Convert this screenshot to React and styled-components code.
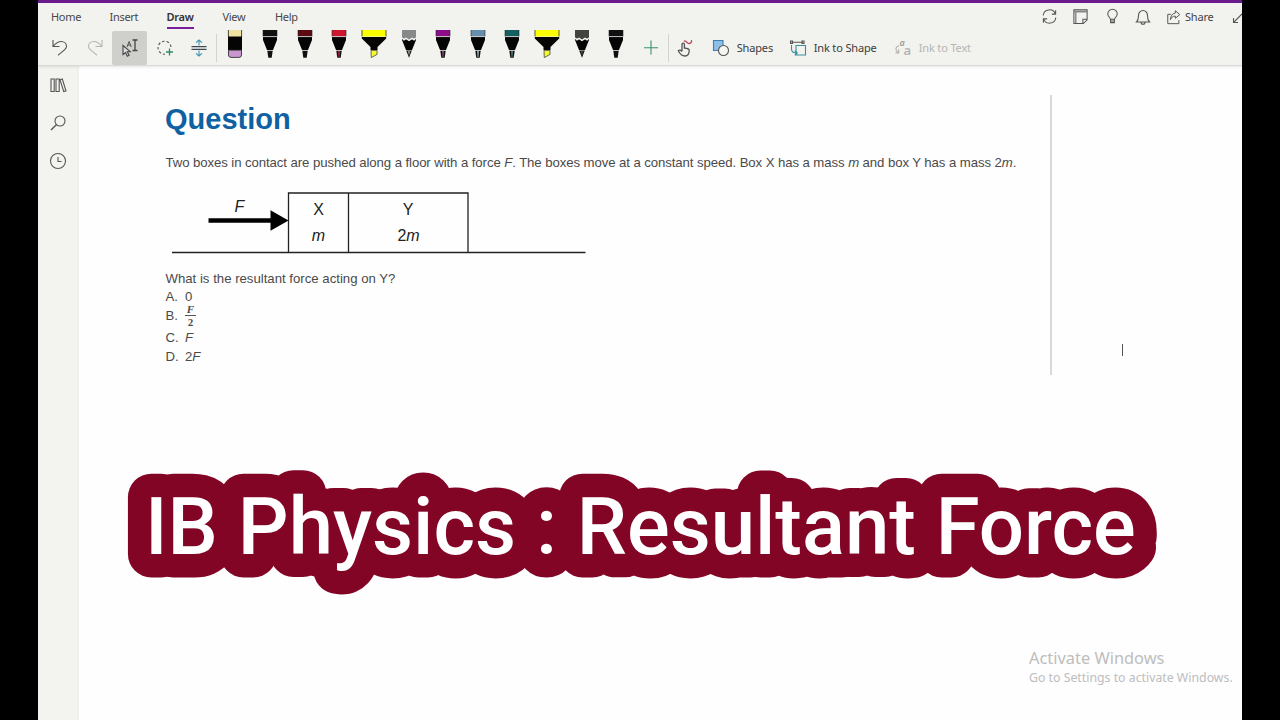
import styled, { createGlobalStyle } from 'styled-components';

const GlobalStyle = createGlobalStyle`
    * {
        box-sizing: border-box;
    }
    body {
        margin: 0;
        background: #000;
        font-family: 'Noto Sans', 'Open Sans', sans-serif;
    }
`

const Screen = styled.div`
    display: flex;
    justify-content: center;
    width: 1280px;
    height: 720px;
    background: #000;
    overflow: hidden;
`

const Window = styled.div`
    position: relative;
    display: flex;
    flex-direction: column;
    width: 1204px;
    height: 720px;
    background: #fefefe;
    overflow: hidden;
`

const Ribbon = styled.header`
    display: flex;
    flex-direction: column;
    flex: none;
    height: 66px;
    background: #f2f2ee;
    border-top: 3px solid #6a1a8c;
    border-bottom: 1px solid #d9d9d8;
    box-shadow: 0 1px 3px rgba(0, 0, 0, 0.1);
    z-index: 1;
`

const TabRow = styled.div`
    display: flex;
    justify-content: space-between;
    height: 28px;
`

const Tabs = styled.nav`
    display: flex;
    gap: 28.5px;
    padding-left: 13px;
`

const Tab = styled.a`
    width: ${(p) => p.$width}px;
    height: 26px;
    border-bottom: 2px solid ${(p) => p.$active ? '#7a1f9c' : 'transparent'};
    color: ${(p) => p.$active ? '#333' : '#484848'};
    font-size: 11px;
    font-weight: ${(p) => p.$active ? 600 : 400};
    letter-spacing: -0.3px;
    line-height: 27px;
    white-space: nowrap;
`

const Actions = styled.div`
    display: flex;
    align-items: center;
    height: 27px;
`

const Action = styled.div`
    display: flex;
    align-items: center;
    justify-content: center;
    width: 31.3px;
`

const Share = styled.div`
    display: flex;
    align-items: center;
    gap: 3px;
    width: 73px;
    padding-left: 7px;
    color: #444;
    font-size: 11px;
    letter-spacing: -0.2px;
`

const Tools = styled.div`
    display: flex;
    align-items: center;
    height: 34px;
    padding-left: 4px;
`

const ToolButton = styled.div`
    display: flex;
    align-items: center;
    justify-content: center;
    width: ${(p) => p.$width || 35}px;
    height: 34px;
    flex: none;
    border-radius: 2px;
    background: ${(p) => p.$active ? '#cfcfcc' : 'transparent'};
`

const PenButton = styled(ToolButton)`
    align-items: flex-start;

    svg {
        margin-top: -2px;
    }
`

const Divider = styled.div`
    flex: none;
    width: 1px;
    height: 28px;
    background: #d2d2d0;
`

const LabelButton = styled.div`
    display: flex;
    align-items: center;
    gap: 7px;
    flex: none;
    width: ${(p) => p.$width}px;
    padding-left: 10px;
    color: ${(p) => p.$disabled ? '#b5b5b3' : '#3c3c3c'};
    font-size: 11px;
    letter-spacing: -0.15px;
    line-height: 16px;
    white-space: nowrap;
`

const Body = styled.div`
    display: flex;
    flex: 1;
`

const Rail = styled.aside`
    display: flex;
    flex-direction: column;
    align-items: center;
    gap: 20px;
    width: 41px;
    padding-top: 10px;
    background: #f3f4f0;
    border-right: 2px solid #f0f0ef;
`

const Page = styled.main`
    display: flex;
    align-items: flex-start;
    flex: 1;
    padding: 29px 0 0 86.5px;
`

const Question = styled.section`
    width: 886px;
    height: 280px;
    border-right: 2px solid #d9d9d9;
    color: #4a4a4a;
    font-family: 'Liberation Sans', Arial, sans-serif;
    font-size: 13.2px;
`

const Title = styled.h1`
    margin: 0 0 0 -0.5px;
    color: #0f61a2;
    font-size: 29px;
    line-height: 49px;
`

const Prompt = styled.p`
    margin: 9px 0 0;
    line-height: 20px;
    letter-spacing: ${(p) => p.$spacing || 0}px;
    white-space: nowrap;
`

const Figure = styled.svg`
    display: block;
    margin: 19px 0 15px 6.5px;
    font-family: 'Liberation Sans', Arial, sans-serif;
    font-size: 16px;
    fill: #222;
`

const Options = styled.ol`
    display: flex;
    flex-direction: column;
    margin: 0;
    padding: 0;
    list-style: none;
`

const Option = styled.li`
    display: flex;
    align-items: center;
    height: ${(p) => p.$height}px;
`

const Letter = styled.span`
    width: 19.5px;
`

const Fraction = styled.span`
    display: flex;
    flex-direction: column;
    align-items: center;
    width: 11px;
    font-family: 'Liberation Serif', serif;
    font-size: 11px;
    font-weight: bold;
    line-height: 12px;

    i {
        width: 100%;
        border-bottom: 1px solid #555;
        text-align: center;
    }
`

const Caret = styled.div`
    width: 1px;
    height: 12px;
    margin: 249px 0 0 70.5px;
    background: #555;
`

const Banner = styled.svg`
    position: absolute;
    left: 72px;
    top: 450px;
    font-family: Roboto, sans-serif;
    font-size: 79.75px;
    font-weight: 500;
    fill: #fff;
    stroke: #820526;
    stroke-linejoin: round;
    paint-order: stroke;
`

const Watermark = styled.div`
    position: absolute;
    left: 991px;
    top: 648px;
    color: #bdbdbd;
    white-space: nowrap;
`

const WatermarkTitle = styled.div`
    font-size: 16.4px;
    line-height: 20px;
`

const WatermarkText = styled.div`
    font-size: 12.3px;
    line-height: 19px;
`

const Icon = ({ size = 18, color = '#555', children }) => (
    <svg width={size} height={size} viewBox="0 0 18 18" fill="none" stroke={color} strokeWidth="1.1">
        {children}
    </svg>
)

const Pen = ({ cap, tip = '#111' }) => (
    <svg width="26" height="30" viewBox="0 0 26 30">
        <path d="M6 1h14v6.5H6z" fill={cap} />
        <path d="M6 1v6.5M20 1v6.5" stroke="#222" strokeWidth=".6" />
        <path d="M6 8h14v3l-4 10h-6L6 11z" fill="#050505" />
        <path d="M6 7.6h14" stroke="#c9c9c9" strokeWidth=".8" />
        <path d="M10.3 21.7h5.4l-1 7h-3.4z" fill="#111" />
        <path d="M12 22h2l-.4 6h-1.2z" fill={tip} />
    </svg>
)

const Highlighter = () => (
    <svg width="26" height="30" viewBox="0 0 26 30">
        <path d="M.8 1h24.4v6.5H.8z" fill="#fbff00" />
        <path d="M1 1v6.5M25 1v6.5" stroke="#333" strokeWidth=".8" />
        <path d="M.8 8h24.4v1.5L16.5 18v3h-7v-3L.8 9.5z" fill="#050505" />
        <path d="M10 21.4h6v4l-5.7 3.2z" fill="#f4fa2c" stroke="#444" strokeWidth=".8" />
    </svg>
)

const Pencil = ({ cap }) => (
    <svg width="26" height="30" viewBox="0 0 26 30">
        <path d="M6 6h14v5l-4 10h-6L6 11z" fill="#050505" />
        <path d="M6 1h14v8.3l-2 1.2-2-1.5-3 2-3-2-2 1.5-2-1.2z" fill={cap} />
        <path d="M6 9l2 1.7 2-1.4 3 2 3-2 2 1.4L20 9" fill="none" stroke="#f5f5f5" strokeWidth="1.5" />
        <path d="M10.2 21.5h5.6L13 28.8z" fill="#111" />
        <path d="M11.7 22h2.6L13 27z" fill={cap} />
    </svg>
)

const Eraser = () => (
    <svg width="26" height="30" viewBox="0 0 26 30">
        <path d="M6 1h14v7H6z" fill="#eee3a0" />
        <path d="M6.4 1v7M19.6 1v7" stroke="#222" strokeWidth=".8" />
        <path d="M6 7.5h14V21H6z" fill="#050505" />
        <path d="M6.5 21.2h13V26q0 2.4-2.4 2.4H8.9Q6.5 28.4 6.5 26z" fill="#c996d2" stroke="#333" strokeWidth=".9" />
    </svg>
)

const pens = [
    <Eraser />,
    <Pen cap="#111" />,
    <Pen cap="#5c0a12" />,
    <Pen cap="#ce1630" tip="#a8203a" />,
    <Highlighter />,
    <Pencil cap="#858989" />,
    <Pen cap="#8b0d87" tip="#77406f" />,
    <Pen cap="#688eae" tip="#8d9ca6" />,
    <Pen cap="#145f60" tip="#4b7474" />,
    <Highlighter />,
    <Pencil cap="#42433e" />,
    <Pen cap="#111" />,
]

const tabs = [
    { name: 'Home', width: 30 },
    { name: 'Insert', width: 28.5 },
    { name: 'Draw', width: 27.5 },
    { name: 'View', width: 24 },
    { name: 'Help', width: 24 },
]

const RibbonTabs = () => (
    <TabRow>
        <Tabs>
            {tabs.map((tab) => (
                <Tab key={tab.name} $width={tab.width} $active={tab.name === 'Draw'}>{tab.name}</Tab>
            ))}
        </Tabs>
        <Actions>
            <Action>
                <Icon size={17}>
                    <path d="M2.300 8A6.700 6.700 0 0 1 15.300 6.500M15.700 10A6.700 6.700 0 0 1 2.700 11.500M15.500 2.500v4h-4M2.500 15.500v-4h4" />
                </Icon>
            </Action>
            <Action>
                <Icon size={17}>
                    <path d="M2 2h14v10.500l-4 4H2zM16 12h-4.500v4.500" />
                    <path d="M2 4h14M4 4v12" strokeWidth="1.5" stroke="#888" />
                </Icon>
            </Action>
            <Action>
                <Icon size={17}>
                    <path d="M6.800 12c0-2-2.800-2.700-2.800-5.700a5 5 0 0 1 10 0c0 3-2.800 3.700-2.800 5.700zM7 12v3.500h4V12M7 13.800h4" />
                </Icon>
            </Action>
            <Action>
                <Icon>
                    <path d="M2.500 14c1.500-1.500 2-3 2-6.500a4.500 5 0 0 1 9 0c0 3.500.5 5 2 6.500zM7 14.200a2 2 0 0 0 4 0" />
                </Icon>
            </Action>
            <Share>
                <Icon size={16}>
                    <path d="M5.500 6H2v10.500h12.500v-4M10.500 2l5 4.300-5 4.200V8C7.500 8 6 9.500 5 12c0-4 2-7 5.500-7.500z" />
                </Icon>
                Share
            </Share>
            <svg width="10" height="14" viewBox="0 0 10 14" fill="none" stroke="#555" strokeWidth="1.1">
                <path d="M1.500 12.500L10 4M1.500 8v4.500H6" />
            </svg>
        </Actions>
    </TabRow>
)

const DrawTools = () => (
    <Tools>
        <ToolButton>
            <Icon>
                <path d="M2 1v6.500h6.500M2.300 7.200C5 4 7 2.500 10 2.500c3.500 0 5.500 2.300 5.500 4.700 0 2.300-1.500 3.300-8.500 9" />
            </Icon>
        </ToolButton>
        <ToolButton>
            <Icon color="#b4b4b2">
                <path d="M16 1v6.500H9.500M15.700 7.200C13 4 11 2.500 8 2.500 4.500 2.500 2.500 4.800 2.500 7.200c0 2.300 1.500 3.300 8.500 9" />
            </Icon>
        </ToolButton>
        <ToolButton $active>
            <Icon color="#444">
                <path d="M2 6.500v9l2.500-2 1.800 3.700 1.800-.9-1.900-3.600h3z" fill="#ddd" />
                <path d="M6 8l2.100-5.500L10.300 8M6.900 6h2.600" strokeWidth=".9" />
                <path d="M11.500 1h5M14 1v10.500M11.500 11.500h5" strokeWidth="1.3" />
            </Icon>
        </ToolButton>
        <ToolButton>
            <Icon>
                <path d="M15 8A6.500 6.500 0 1 0 9 15.200" strokeDasharray="2.6 2" />
                <path d="M13.500 9.500v7M10 13h7" stroke="#2f8a68" strokeWidth="1.3" />
            </Icon>
        </ToolButton>
        <ToolButton $width={34}>
            <Icon>
                <path d="M1.500 7.700h15M1.500 10.300h15" stroke="#3c4a52" strokeWidth="1.2" />
                <path d="M9 6.500V1M6 3.700L9 1l3 2.700M9 11.500V17M6 14.300L9 17l3-2.700" stroke="#3e95b5" />
            </Icon>
        </ToolButton>
        <Divider />
        <PenTray>
            {pens.map((pen, i) => (
                <PenButton key={i} $width={34.65}>{pen}</PenButton>
            ))}
        </PenTray>
        <ToolButton $width={34}>
            <Icon color="#37936f">
                <path d="M9 1.500v14M2 8.700h14" />
            </Icon>
        </ToolButton>
        <Divider />
        <ToolButton $width={33}>
            <Icon>
                <path d="M6 12V5.300a1.200 1.200 0 0 1 2.400 0V9c2.700.3 4.800.7 4.800 2.200 0 2.700-.7 5.800-4.200 5.800-3.500 0-5-1.800-6.700-5.200 1.200-1.300 2.500-.8 3.700.7M10 10V8.800M11.700 10.500V9.300" strokeWidth="1.3" />
                <path d="M8 2.500C9.500.5 11.500 5 13.500 4.500c2-.5 2.500-2 1.800-3.500" stroke="#c24b5e" strokeWidth="1.3" />
            </Icon>
        </ToolButton>
        <LabelButton $width={77}>
            <Icon>
                <path d="M1.500 1.500h9.500v10H1.500z" fill="#8fbfe6" stroke="#3a7fb8" />
                <circle cx="11.5" cy="11.5" r="5" fill="#f6f6f3" />
            </Icon>
            Shapes
        </LabelButton>
        <LabelButton $width={105}>
            <Icon>
                <path d="M2.500 3.300h11.500M1.500 2h2v2.500h-2zM13 2h2v2.500h-2z" />
                <path d="M7 6.500h9.500V16H7z" stroke="#3a8f9b" />
                <path d="M2.500 6v4c0 3 2 4 5.500 4M5.800 11.700L8.300 14l-2.500 2.300" stroke="#3a8f9b" />
            </Icon>
            Ink to Shape
        </LabelButton>
        <LabelButton $width={100} $disabled>
            <svg width="18" height="26" viewBox="0 0 18 26" fill="none" stroke="#b5b5b3" strokeWidth="1.2">
                <path d="M5 10.500C1 12 1 15 4 17.500M1.500 17.800h3.200v-3.500" />
                <text x="5.5" y="11" fontSize="9" fontStyle="italic" fontWeight="600" fill="#a0a09e" stroke="none">a</text>
                <text x="9.5" y="20" fontSize="13" fontWeight="600" fill="#b5b5b3" stroke="none">a</text>
            </svg>
            Ink to Text
        </LabelButton>
    </Tools>
)

const PenTray = styled.div`
    display: flex;
    flex: none;
    padding-left: 1px;
`

const BoxesFigure = () => (
    <Figure width="414" height="62" viewBox="0 0 414 62">
        <path d="M0 60.500h413.500M116.500 60.500v-59.500h179.500v59.500M176.500 1v59.500" fill="none" stroke="#222" strokeWidth="1.3" />
        <path d="M36.500 26.200h62v-8l18 10.300-18 10.300v-8h-62z" fill="#000" />
        <g textAnchor="middle">
            <text x="67.5" y="20" fontStyle="italic">F</text>
            <text x="146.5" y="23">X</text>
            <text x="146.5" y="49" fontStyle="italic">m</text>
            <text x="236" y="23">Y</text>
            <text x="236.5" y="49">2<tspan fontStyle="italic">m</tspan></text>
        </g>
    </Figure>
)

const outlines = [47, 38, 30, 21, 11]

const TitleBanner = () => (
    <Banner width="1070" height="160">
        {outlines.map((width) => (
            <use key={width} href="#banner-title" strokeWidth={width} />
        ))}
        <defs>
            <text id="banner-title" x="35" y="104">IB Physics : Resultant Force</text>
        </defs>
    </Banner>
)

const App = () => {
    return (
        <>
            <GlobalStyle />
            <Screen>
                <Window>
                    <Ribbon>
                        <RibbonTabs />
                        <DrawTools />
                    </Ribbon>
                    <Body>
                        <Rail>
                            <Icon>
                                <path d="M2 3h3.200v12.500H2zM7 3h3.200v12.500H7zM11 3.700l2.300-.7 3.700 11.800-2.300.7z" />
                            </Icon>
                            <Icon>
                                <circle cx="11" cy="7" r="5" />
                                <path d="M7.300 10.700L2 16" strokeWidth="1.4" />
                            </Icon>
                            <Icon>
                                <circle cx="9" cy="9" r="7.5" />
                                <path d="M9 5v4.500h3.500" />
                            </Icon>
                        </Rail>
                        <Page>
                            <Question>
                                <Title>Question</Title>
                                <Prompt $spacing={-0.086}>
                                    Two boxes in contact are pushed along a floor with a force <i>F</i>. The boxes move at a constant speed. Box X has a mass <i>m</i> and box Y has a mass 2<i>m</i>.
                                </Prompt>
                                <BoxesFigure />
                                <Prompt>What is the resultant force acting on Y?</Prompt>
                                <Options>
                                    <Option $height={15}><Letter>A.</Letter>0</Option>
                                    <Option $height={23}>
                                        <Letter>B.</Letter>
                                        <Fraction><i>F</i>2</Fraction>
                                    </Option>
                                    <Option $height={21}><Letter>C.</Letter><i>F</i></Option>
                                    <Option $height={16}><Letter>D.</Letter>2<i>F</i></Option>
                                </Options>
                            </Question>
                            <Caret />
                        </Page>
                    </Body>
                    <TitleBanner />
                    <Watermark>
                        <WatermarkTitle>Activate Windows</WatermarkTitle>
                        <WatermarkText>Go to Settings to activate Windows.</WatermarkText>
                    </Watermark>
                </Window>
            </Screen>
        </>
    )
}

export default App;
